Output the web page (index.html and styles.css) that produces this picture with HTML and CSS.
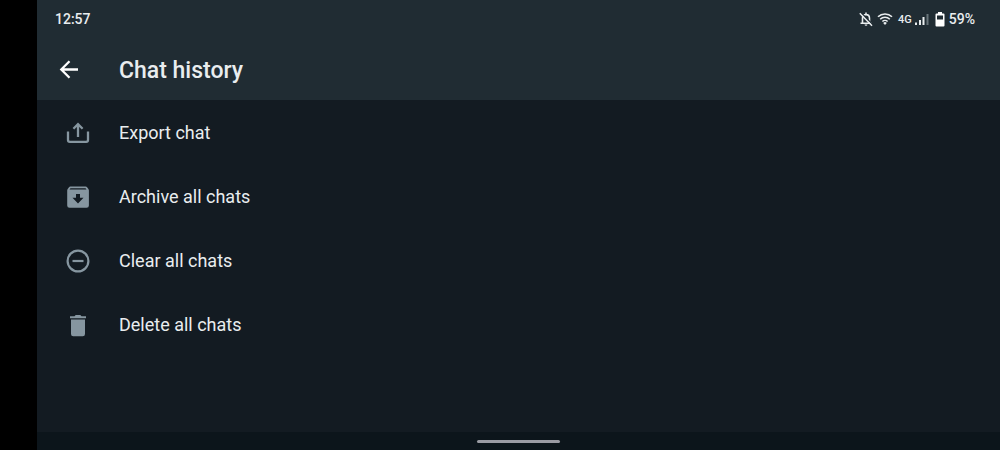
FILE: index.html
```
<!DOCTYPE html>
<html lang="en">

<head>
    <meta charset="UTF-8">
    <meta name="viewport" content="width=device-width, initial-scale=1.0">
    <title>Chat history</title>
    <link rel="stylesheet" href="styles.css">
</head>

<body>
    <div class="screen">
        <header>
            <div class="status">
                <span class="time">12:57</span>
                <div class="status-icons">
                    <svg class="bell" width="14" height="16" viewBox="0 0 14 16">
                        <path d="M3.5 12V7.2C3.5 5 5 3.6 7 3.6s3.5 1.4 3.5 3.6V12M1.500 12.300h11M7 3.600V1.500" fill="none" stroke="#e9edef" stroke-width="1.600" />
                        <path d="M5.600 13.400h2.800a1.400 1.400 0 0 1-2.800 0z" fill="#e9edef" />
                        <path d="M2.200 1.700l11.600 12" stroke="#202c33" stroke-width="1.300" />
                        <path d="M.8 2.200l12.200 12.600" stroke="#e9edef" stroke-width="1.500" />
                    </svg>
                    <svg class="wifi" width="16" height="14" viewBox="0 0 16 14">
                        <path d="M1 4.800a10 10 0 0 1 14 0M3.200 7.200a6.800 6.800 0 0 1 9.600 0M5.400 9.500a3.700 3.700 0 0 1 5.200 0" fill="none" stroke="#e9edef" stroke-width="1.600" />
                        <path d="M8 13l-1.800-2a2.500 2.500 0 0 1 3.600 0z" fill="#e9edef" />
                    </svg>
                    <span class="network">4G</span>
                    <svg class="signal" width="14" height="12" viewBox="0 0 14 12">
                        <path d="M0 9.500h2V12H0zM4 7h2v5H4zM7.500 4h2v8h-2z" fill="#e9edef" />
                        <path d="M11.500 1h2v11h-2z" fill="#68747a" />
                    </svg>
                    <svg class="battery" width="10" height="15" viewBox="0 0 10 15">
                        <path d="M3 0h4v1.500h1.500Q9.500 1.500 9.500 2.500v11q0 1-1 1h-7q-1 0-1-1v-11q0-1 1-1H3zM2 3.500v4h6v-4z" fill="#fff" fill-rule="evenodd" />
                    </svg>
                    <span class="percent">59%</span>
                </div>
            </div>
            <div class="title-bar">
                <button class="back" type="button" aria-label="Back">
                    <svg width="24" height="24" viewBox="0 0 24 24">
                        <path d="M21 11.500H4.500M12.500 3.300l-8.200 8.200 8.200 8.200" fill="none" stroke="#fff" stroke-width="2.300" />
                    </svg>
                </button>
                <h1>Chat history</h1>
            </div>
        </header>
        <main>
            <ul>
                <li>
                    <button class="item" type="button">
                        <svg width="28" height="28" viewBox="0 0 28 28">
                            <path d="M4 13.500V22q0 1.800 1.800 1.800h16.400q1.800 0 1.800-1.800v-8.500M14 19V6.500M9.400 10.800L14 6.200l4.600 4.600" fill="none" stroke="#8696a0" stroke-width="2.300" />
                        </svg>
                        <span>Export chat</span>
                    </button>
                </li>
                <li>
                    <button class="item" type="button">
                        <svg width="28" height="28" viewBox="0 0 28 28">
                            <path d="M6.400 4.600h15.200q1 0 1.700.8L24.400 7q.5.600.5 1.400V23.500q0 2.300-2.300 2.300H5.500q-2.300 0-2.300-2.300V8.400Q3.200 7.600 3.700 7l1.100-1.600q.6-.8 1.600-.8zM6.500 6.200L5.500 7.500h17L21.500 6.200zM12 12v3.800H8.500l5.500 5.700 5.500-5.700H16V12z" fill="#8696a0" fill-rule="evenodd" />
                        </svg>
                        <span>Archive all chats</span>
                    </button>
                </li>
                <li>
                    <button class="item" type="button">
                        <svg width="28" height="28" viewBox="0 0 28 28">
                            <circle cx="14" cy="15" r="10.400" fill="none" stroke="#8696a0" stroke-width="2.200" />
                            <path d="M8.500 15h11" stroke="#8696a0" stroke-width="2.200" />
                        </svg>
                        <span>Clear all chats</span>
                    </button>
                </li>
                <li>
                    <button class="item" type="button">
                        <svg width="28" height="28" viewBox="0 0 28 28">
                            <path d="M6 6.200h4.500l1.200-1.200h4.600l1.200 1.200H22v2H6zM7 9.600h14V24q0 2.200-2.200 2.200H9.200Q7 26.200 7 24z" fill="#8696a0" />
                        </svg>
                        <span>Delete all chats</span>
                    </button>
                </li>
            </ul>
        </main>
        <div class="nav">
            <div class="handle"></div>
        </div>
    </div>
</body>

</html>
```
FILE: styles.css
```
* {
    margin: 0;
    padding: 0;
    box-sizing: border-box;
    list-style: none;
}

body {
    background-color: #000;
    font-family: Roboto, "Liberation Sans", sans-serif;
    color: #e9edef;
}

svg {
    display: block;
    flex-shrink: 0;
}

button {
    appearance: none;
    border: none;
    background: none;
    color: inherit;
    font-family: inherit;
    cursor: pointer;
}

.screen {
    min-height: 100vh;
    margin-left: 37px;
    display: flex;
    flex-direction: column;
    background-color: #131b22;
}

header {
    background-color: #202c33;
}

.status {
    height: 38px;
    padding: 0 25px 0 18px;
    display: flex;
    justify-content: space-between;
    align-items: center;
    font-size: 14px;
    font-weight: 500;
}

.status-icons {
    display: flex;
    align-items: center;
}

.wifi {
    margin-left: 4px;
}

.network {
    margin-left: 5px;
    font-size: 11px;
}

.signal {
    margin-left: 3px;
}

.battery {
    margin-left: 6px;
}

.percent {
    margin-left: 4px;
}

.title-bar {
    height: 62px;
    padding: 2px 0 0 20px;
    display: flex;
    align-items: center;
}

.back {
    margin-right: 38px;
}

h1 {
    font-size: 23px;
    font-weight: 500;
}

main {
    flex: 1;
}

.item {
    width: 100%;
    height: 64px;
    padding-left: 27px;
    display: flex;
    align-items: center;
    gap: 27px;
    font-size: 18px;
    text-align: left;
}

.nav {
    height: 18px;
    display: flex;
    justify-content: center;
    align-items: center;
    background-color: #0c151b;
}

.handle {
    width: 83px;
    height: 3px;
    border-radius: 2px;
    background-color: #9a9ba3;
}
```
